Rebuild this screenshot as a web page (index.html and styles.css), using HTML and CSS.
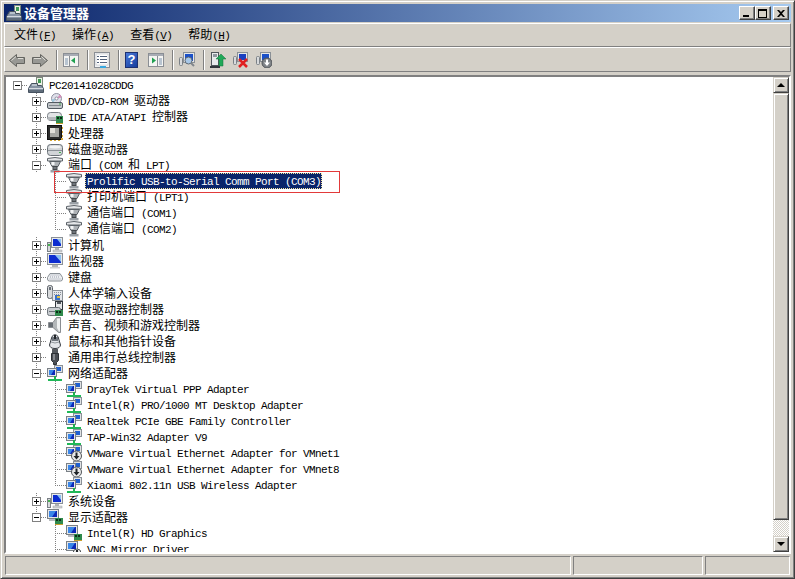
FILE: index.html
```html
<!DOCTYPE html>
<html lang="zh-CN">
<head>
<meta charset="utf-8">
<title>设备管理器</title>
<link rel="stylesheet" href="styles.css">
</head>
<body>
<svg class="defs" xmlns="http://www.w3.org/2000/svg">
  <symbol id="i-pc" viewBox="0 0 16 16">
    <rect x="8.500" y="0.500" width="6" height="9" fill="#eef2e8" stroke="#7c8a7c"/>
    <rect x="10" y="2" width="3" height="4" fill="#3f9a55"/>
    <path d="M3.500 6.500h6v2h4l2 3v4H.5v-4z" fill="#8794a4" stroke="#46525f"/>
    <rect x="1" y="11" width="14" height="1" fill="#d5dae0"/>
    <rect x="1" y="13" width="14" height="2" fill="#5f6c7a"/>
    <rect x="4" y="7" width="5" height="2" fill="#b8c2cc"/>
  </symbol>
  <symbol id="i-dvd" viewBox="0 0 16 16">
    <circle cx="9.500" cy="5.500" r="5" fill="#dfe0ea" stroke="#8f90a0"/>
    <path d="M9.500 5.500L13 1.500a5 5 0 0 1 1.500 3z" fill="#d58fb8"/>
    <path d="M9.500 5.500L6 9.500a5 5 0 0 1-1.500-3z" fill="#9fc8dc"/>
    <circle cx="9.500" cy="5.500" r="1.500" fill="#fff" stroke="#8f90a0"/>
    <rect x="0.500" y="9.500" width="15" height="6" rx="1.500" fill="#c4c8cc" stroke="#525a62"/>
    <rect x="2" y="12" width="12" height="1" fill="#848a90"/>
    <rect x="12" y="10.500" width="2" height="1" fill="#40b050"/>
  </symbol>
  <symbol id="i-ide" viewBox="0 0 16 16">
    <rect x="0.500" y="3.500" width="14" height="8" rx="3" fill="#e2e4e6" stroke="#7a8086"/>
    <rect x="1" y="8" width="13" height="3" fill="#b4b8bc"/>
    <rect x="9" y="7" width="7" height="7" fill="#2f8a4c"/>
    <rect x="10" y="8" width="2" height="2" fill="#0c2c18"/>
    <rect x="13" y="8" width="2" height="2" fill="#0c2c18"/>
    <rect x="9" y="14" width="7" height="1" fill="#c9a030"/>
  </symbol>
  <symbol id="i-cpu" viewBox="0 0 16 16">
    <rect x="0.500" y="0.500" width="14" height="14" fill="#2c2c2c" stroke="#111"/>
    <rect x="3" y="3" width="9" height="9" fill="#a8a8a4"/>
    <rect x="3" y="3" width="5" height="5" fill="#e2e0da"/>
    <rect x="15" y="2" width="1" height="2" fill="#d6a83a"/>
    <rect x="15" y="6" width="1" height="2" fill="#d6a83a"/>
    <rect x="15" y="10" width="1" height="2" fill="#d6a83a"/>
    <rect x="14" y="13" width="2" height="2" fill="#d6a83a"/>
    <rect x="3" y="15" width="2" height="1" fill="#d6a83a"/>
    <rect x="7" y="15" width="2" height="1" fill="#d6a83a"/>
    <rect x="11" y="15" width="2" height="1" fill="#d6a83a"/>
  </symbol>
  <symbol id="i-disk" viewBox="0 0 16 16">
    <rect x="0.500" y="3.500" width="15" height="11" rx="3" fill="#d2d5d8" stroke="#6b7278"/>
    <ellipse cx="8" cy="6" rx="6" ry="1.500" fill="#f2f3f4"/>
    <rect x="1" y="9" width="14" height="1" fill="#8c9298"/>
    <rect x="12" y="11" width="2" height="1" fill="#40b050"/>
  </symbol>
  <symbol id="i-port" viewBox="0 0 16 16">
    <path d="M0.500 1.500q7.500-2 15 0v2.500h-15z" fill="#e4e6e8" stroke="#5c6268"/>
    <path d="M2.500 4.500h11l-2.500 5h-6z" fill="#aeb2b6" stroke="#5c6268"/>
    <rect x="4.500" y="5" width="3" height="3" fill="#f4f5f6"/>
    <rect x="6" y="9.500" width="4" height="3" fill="#70767c" stroke="#44484c"/>
    <rect x="3.500" y="13" width="9" height="2.500" fill="#9aa0a6"/>
  </symbol>
  <symbol id="i-computer" viewBox="0 0 16 16">
    <rect x="0.500" y="5.500" width="3" height="9" fill="#d8dadc" stroke="#7a8086"/>
    <rect x="1" y="7" width="2" height="2" fill="#48b050"/>
    <rect x="4.500" y="0.500" width="11" height="10" fill="#e8eaec" stroke="#8a9096"/>
    <rect x="6" y="2" width="8" height="7" fill="#0c2cd0"/>
    <path d="M10 2h4v5z" fill="#8cc0f0"/>
    <rect x="8" y="11" width="4" height="2" fill="#b0b4b8"/>
    <rect x="6" y="13" width="9" height="2" fill="#d4d6d8" stroke="#9a9ea2" stroke-width="0.500"/>
  </symbol>
  <symbol id="i-monitor" viewBox="0 0 16 16">
    <rect x="0.500" y="0.500" width="15" height="11" fill="#e6e8ea" stroke="#8a9096"/>
    <rect x="2" y="2" width="12" height="8" fill="#0c2cd0"/>
    <path d="M8 2h6v7z" fill="#8cc0f0"/>
    <rect x="5" y="12" width="6" height="2" fill="#b0b4b8"/>
    <rect x="3" y="14" width="10" height="1.500" fill="#d0d2d4"/>
  </symbol>
  <symbol id="i-kbd" viewBox="0 0 16 16">
    <path d="M3 4.500h10l2.500 4v1.500q0 2-2 2h-11q-2 0-2-2V8.500z" fill="#eceef0" stroke="#8a9096"/>
    <path d="M3.500 6h9M3 8h10M2.500 10h11" stroke="#9aa0b0" stroke-dasharray="1 1"/>
  </symbol>
  <symbol id="i-hid" viewBox="0 0 16 16">
    <rect x="0.500" y="0.500" width="5" height="13" rx="2" fill="#d8dadc" stroke="#5c6268"/>
    <rect x="2" y="2" width="2" height="3" fill="#6a7078"/>
    <rect x="5.500" y="5.500" width="10" height="10" fill="#e4e6ea" stroke="#8a9096"/>
    <path d="M7 7.500h7M7 9.500h7" stroke="#8a9096" stroke-dasharray="1 1"/>
    <rect x="8" y="10" width="5" height="5" fill="#3a70c8"/>
    <rect x="10" y="11" width="3" height="2" fill="#e0c040"/>
  </symbol>
  <symbol id="i-floppy" viewBox="0 0 16 16">
    <rect x="8.500" y="0.500" width="7" height="8" fill="#e4e6e8" stroke="#30363c"/>
    <rect x="10" y="1" width="4" height="2" fill="#50565c"/>
    <rect x="0.500" y="6.500" width="13" height="8" rx="2" fill="#c8ccd0" stroke="#6b7278"/>
    <rect x="2" y="10" width="6" height="1" fill="#6b7278"/>
    <rect x="8" y="9" width="8" height="6" fill="#2f8a4c"/>
    <rect x="9" y="10" width="2" height="2" fill="#0c2c18"/>
    <rect x="12" y="10" width="2" height="2" fill="#0c2c18"/>
  </symbol>
  <symbol id="i-sound" viewBox="0 0 16 16">
    <path d="M9.500 0.500h4v15h-2L6 10.500H1.500v-5H6z" fill="#b4b8ba" stroke="#8a8e92"/>
    <path d="M10 1.500h3v13h-1L10 11z" fill="#f0f2f2"/>
    <rect x="2" y="6" width="4" height="4" fill="#666c72"/>
  </symbol>
  <symbol id="i-mouse" viewBox="0 0 16 16">
    <path d="M5 3.500Q8 0 11 3.500L13.500 12Q13 15.500 8 15.500T2.500 12z" fill="#e4e6ea" stroke="#33383e"/>
    <path d="M5 4h6v4H5z" fill="#70767e"/>
    <rect x="7" y="2" width="2" height="4" fill="#22262a"/>
    <path d="M4 9q4 2 8 0" stroke="#90969c" fill="none"/>
  </symbol>
  <symbol id="i-usb" viewBox="0 0 16 16">
    <rect x="5" y="0" width="6" height="4" fill="#55595e"/>
    <path d="M4.500 4.500h7v7l-2 2v2h-3v-2l-2-2z" fill="#4a4e54" stroke="#2c3034"/>
    <rect x="6" y="5" width="2" height="6" fill="#86898e"/>
  </symbol>
  <symbol id="i-net" viewBox="0 0 16 16">
    <rect x="7.500" y="0.500" width="8" height="7" fill="#e0e2e4" stroke="#8a9096"/>
    <rect x="9" y="2" width="5" height="4" fill="#2060d0"/>
    <rect x="0.500" y="3.500" width="9" height="8" fill="#e4e6e8" stroke="#7a8086"/>
    <rect x="2" y="5" width="6" height="5" fill="#0c28b8"/>
    <path d="M2 5h5L4 10H2z" fill="#3a86e8"/>
    <rect x="7" y="11" width="2" height="3" fill="#20b050"/>
    <rect x="1" y="14" width="14" height="2" fill="#20b858"/>
  </symbol>
  <symbol id="i-netdown" viewBox="0 0 16 16">
    <rect x="7.500" y="0.500" width="8" height="7" fill="#e0e2e4" stroke="#8a9096"/>
    <rect x="9" y="2" width="5" height="4" fill="#2060d0"/>
    <rect x="0.500" y="2.500" width="9" height="8" fill="#e4e6e8" stroke="#7a8086"/>
    <rect x="2" y="4" width="6" height="5" fill="#0c28b8"/>
    <path d="M2 4h5L4 9H2z" fill="#3a86e8"/>
    <circle cx="10.500" cy="11" r="5" fill="#e8e8e8" stroke="#505458"/>
    <path d="M9.500 7.500h2v3.500h2l-3 3.500-3-3.500h2z" fill="#202428"/>
  </symbol>
  <symbol id="i-display" viewBox="0 0 16 16">
    <rect x="0.500" y="0.500" width="11" height="9" fill="#e4e6e8" stroke="#7a8086"/>
    <rect x="2" y="2" width="8" height="6" fill="#0c28b8"/>
    <path d="M2 2h7L5 8H2z" fill="#3a86e8"/>
    <rect x="2" y="10" width="8" height="2" fill="#b8bcc0"/>
    <rect x="8" y="9" width="8" height="6" fill="#2f8a4c"/>
    <rect x="9" y="10" width="2" height="2" fill="#0c2c18"/>
    <rect x="12" y="10" width="2" height="2" fill="#0c2c18"/>
    <rect x="8" y="15" width="8" height="1" fill="#c9a030"/>
  </symbol>
  <symbol id="i-vnc" viewBox="0 0 16 16">
    <rect x="0.500" y="0.500" width="11" height="9" fill="#e4e6e8" stroke="#7a8086"/>
    <rect x="2" y="2" width="8" height="6" fill="#0c28b8"/>
    <path d="M2 2h7L5 8H2z" fill="#3a86e8"/>
    <circle cx="11" cy="12" r="4" fill="#e8e8e8" stroke="#505458"/>
    <path d="M10 9h2v3h2l-3 3-3-3h2z" fill="#202428"/>
  </symbol>
  <symbol id="t-back" viewBox="0 0 16 16">
    <path d="M7.500 2.500L.5 8.500l7 6v-3h8v-6h-8z" fill="#989894" stroke="#646460"/>
    <path d="M7 4.500L2.500 8.500M9 6.500h5" stroke="#dedcd6" fill="none"/>
  </symbol>
  <symbol id="t-fwd" viewBox="0 0 16 16">
    <path d="M8.500 2.500l7 6-7 6v-3h-8v-6h8z" fill="#989894" stroke="#646460"/>
    <path d="M2 6.500h7M9.500 4.500l4 4" stroke="#dedcd6" fill="none"/>
  </symbol>
  <symbol id="t-tree" viewBox="0 0 16 16">
    <rect x="0.500" y="1.500" width="15" height="13" fill="#f4f4f2" stroke="#8a8e94"/>
    <rect x="1" y="2" width="14" height="2" fill="#a8acb4"/>
    <rect x="2" y="6" width="3" height="7" fill="#b8c4d0"/>
    <path d="M6.500 4v10" stroke="#8a8e94"/>
    <path d="M12 5.500v6l-4-3z" fill="#20a050"/>
  </symbol>
  <symbol id="t-props" viewBox="0 0 16 16">
    <rect x="0.500" y="0.500" width="15" height="15" fill="#f0f2f4" stroke="#8a8e94"/>
    <rect x="2" y="2" width="12" height="11" fill="#fff" stroke="#b0b4b8" stroke-width="0.500"/>
    <path d="M3 4.500h2M6 4.500h7M3 7.500h2M6 7.500h7M3 10.500h2M6 10.500h7" stroke="#50607a"/>
    <rect x="6" y="14" width="6" height="2" fill="#38a8e0"/>
  </symbol>
  <symbol id="t-action" viewBox="0 0 16 16">
    <rect x="0.500" y="1.500" width="15" height="13" fill="#f4f4f2" stroke="#8a8e94"/>
    <rect x="1" y="2" width="14" height="2" fill="#a8acb4"/>
    <rect x="11" y="6" width="3" height="7" fill="#b8c4d0"/>
    <path d="M9.500 4v10" stroke="#8a8e94"/>
    <path d="M4 5.500v6l4-3z" fill="#20a050"/>
  </symbol>
  <symbol id="t-scan" viewBox="0 0 16 16">
    <rect x="0.500" y="5.500" width="3" height="8" rx="1" fill="#d8dadc" stroke="#7a8086"/>
    <rect x="4.500" y="0.500" width="11" height="10" fill="#e4e6e8" stroke="#8a9096"/>
    <rect x="6" y="2" width="8" height="7" fill="#1a50c8"/>
    <circle cx="9.500" cy="8.500" r="3.500" fill="#a8c8e8" stroke="#606870"/>
    <path d="M12 11l3 3" stroke="#80868c" stroke-width="2"/>
  </symbol>
  <symbol id="t-update" viewBox="0 0 16 16">
    <rect x="1.500" y="0.500" width="7" height="13" fill="#e8eaec" stroke="#50565c"/>
    <rect x="3" y="2" width="4" height="3" fill="#9098a0"/>
    <rect x="0" y="14" width="10" height="2" fill="#30363c"/>
    <path d="M11 2l5 5h-3v7H9V7H6z" fill="#20a858" stroke="#107038" stroke-width="0.500"/>
  </symbol>
  <symbol id="t-remove" viewBox="0 0 16 16">
    <rect x="0.500" y="4.500" width="3" height="8" rx="1" fill="#d8dadc" stroke="#7a8086"/>
    <rect x="4.500" y="0.500" width="10" height="9" fill="#e4e6e8" stroke="#8a9096"/>
    <rect x="6" y="2" width="7" height="6" fill="#1a40c0"/>
    <path d="M6 7l8 8M14 7l-8 8" stroke="#e02020" stroke-width="2.500"/>
  </symbol>
  <symbol id="t-disable" viewBox="0 0 16 16">
    <rect x="0.500" y="4.500" width="3" height="8" rx="1" fill="#d8dadc" stroke="#7a8086"/>
    <rect x="4.500" y="0.500" width="10" height="9" fill="#e4e6e8" stroke="#8a9096"/>
    <rect x="6" y="2" width="7" height="6" fill="#1a50c8"/>
    <circle cx="11" cy="11" r="5" fill="#808488" stroke="#505458"/>
    <path d="M10 7.500h2v3h2l-3 3.500-3-3.500h2z" fill="#fff"/>
  </symbol>
</svg>

<div class="window">
  <header class="titlebar">
    <svg class="ic title-icon"><use href="#i-pc"/></svg>
    <span class="title-text">设备管理器</span>
    <div class="caption">
      <button class="cap cap-min" aria-label="最小化"><i></i></button>
      <button class="cap cap-max" aria-label="最大化"><i></i></button>
      <button class="cap cap-close" aria-label="关闭"><svg viewBox="0 0 8 7"><path d="M0 0h2l2 2 2-2h2L5 3.500 8 7H6L4 5 2 7H0l3-3.500z"/></svg></button>
    </div>
  </header>

  <nav class="bar menubar">
    <span class="menu">文件<span class="lat">(<u>F</u>)</span></span>
    <span class="menu">操作<span class="lat">(<u>A</u>)</span></span>
    <span class="menu">查看<span class="lat">(<u>V</u>)</span></span>
    <span class="menu">帮助<span class="lat">(<u>H</u>)</span></span>
  </nav>

  <div class="bar toolbar">
    <span class="tb"><svg class="ic"><use href="#t-back"/></svg></span>
    <span class="tb"><svg class="ic"><use href="#t-fwd"/></svg></span>
    <span class="sep"></span>
    <span class="tb"><svg class="ic"><use href="#t-tree"/></svg></span>
    <span class="sep"></span>
    <span class="tb"><svg class="ic"><use href="#t-props"/></svg></span>
    <span class="sep"></span>
    <span class="tb"><span class="help">?</span></span>
    <span class="tb"><svg class="ic"><use href="#t-action"/></svg></span>
    <span class="sep"></span>
    <span class="tb"><svg class="ic"><use href="#t-scan"/></svg></span>
    <span class="sep"></span>
    <span class="tb"><svg class="ic"><use href="#t-update"/></svg></span>
    <span class="tb"><svg class="ic"><use href="#t-remove"/></svg></span>
    <span class="tb"><svg class="ic"><use href="#t-disable"/></svg></span>
  </div>

  <main class="panel">
    <div class="tree">
      <div class="row root"><span class="tg minus"></span><span class="stub"></span><svg class="ic"><use href="#i-pc"/></svg><span class="label lat">PC20141028CDDG</span></div>

      <div class="row l1 first"><span class="tg"></span><span class="stub"></span><svg class="ic"><use href="#i-dvd"/></svg><span class="label"><span class="lat">DVD/CD-ROM </span>驱动器</span></div>
      <div class="row l1"><span class="tg"></span><span class="stub"></span><svg class="ic"><use href="#i-ide"/></svg><span class="label"><span class="lat">IDE ATA/ATAPI </span>控制器</span></div>
      <div class="row l1"><span class="tg"></span><span class="stub"></span><svg class="ic"><use href="#i-cpu"/></svg><span class="label">处理器</span></div>
      <div class="row l1"><span class="tg"></span><span class="stub"></span><svg class="ic"><use href="#i-disk"/></svg><span class="label">磁盘驱动器</span></div>
      <div class="row l1"><span class="tg minus"></span><span class="stub"></span><svg class="ic"><use href="#i-port"/></svg><span class="label">端口<span class="lat"> (COM </span>和<span class="lat"> LPT)</span></span></div>

      <div class="row l2"><span class="stub"></span><svg class="ic"><use href="#i-port"/></svg><span class="label lat selected">Prolific USB-to-Serial Comm Port (COM3)</span></div>
      <div class="row l2"><span class="stub"></span><svg class="ic"><use href="#i-port"/></svg><span class="label">打印机端口<span class="lat"> (LPT1)</span></span></div>
      <div class="row l2"><span class="stub"></span><svg class="ic"><use href="#i-port"/></svg><span class="label">通信端口<span class="lat"> (COM1)</span></span></div>
      <div class="row l2 last"><span class="stub"></span><svg class="ic"><use href="#i-port"/></svg><span class="label">通信端口<span class="lat"> (COM2)</span></span></div>

      <div class="row l1"><span class="tg"></span><span class="stub"></span><svg class="ic"><use href="#i-computer"/></svg><span class="label">计算机</span></div>
      <div class="row l1"><span class="tg"></span><span class="stub"></span><svg class="ic"><use href="#i-monitor"/></svg><span class="label">监视器</span></div>
      <div class="row l1"><span class="tg"></span><span class="stub"></span><svg class="ic"><use href="#i-kbd"/></svg><span class="label">键盘</span></div>
      <div class="row l1"><span class="tg"></span><span class="stub"></span><svg class="ic"><use href="#i-hid"/></svg><span class="label">人体学输入设备</span></div>
      <div class="row l1"><span class="tg"></span><span class="stub"></span><svg class="ic"><use href="#i-floppy"/></svg><span class="label">软盘驱动器控制器</span></div>
      <div class="row l1"><span class="tg"></span><span class="stub"></span><svg class="ic"><use href="#i-sound"/></svg><span class="label">声音、视频和游戏控制器</span></div>
      <div class="row l1"><span class="tg"></span><span class="stub"></span><svg class="ic"><use href="#i-mouse"/></svg><span class="label">鼠标和其他指针设备</span></div>
      <div class="row l1"><span class="tg"></span><span class="stub"></span><svg class="ic"><use href="#i-usb"/></svg><span class="label">通用串行总线控制器</span></div>
      <div class="row l1"><span class="tg minus"></span><span class="stub"></span><svg class="ic"><use href="#i-net"/></svg><span class="label">网络适配器</span></div>

      <div class="row l2"><span class="stub"></span><svg class="ic"><use href="#i-net"/></svg><span class="label lat">DrayTek Virtual PPP Adapter</span></div>
      <div class="row l2"><span class="stub"></span><svg class="ic"><use href="#i-net"/></svg><span class="label lat">Intel(R) PRO/1000 MT Desktop Adapter</span></div>
      <div class="row l2"><span class="stub"></span><svg class="ic"><use href="#i-net"/></svg><span class="label lat">Realtek PCIe GBE Family Controller</span></div>
      <div class="row l2"><span class="stub"></span><svg class="ic"><use href="#i-net"/></svg><span class="label lat">TAP-Win32 Adapter V9</span></div>
      <div class="row l2"><span class="stub"></span><svg class="ic"><use href="#i-netdown"/></svg><span class="label lat">VMware Virtual Ethernet Adapter for VMnet1</span></div>
      <div class="row l2"><span class="stub"></span><svg class="ic"><use href="#i-netdown"/></svg><span class="label lat">VMware Virtual Ethernet Adapter for VMnet8</span></div>
      <div class="row l2 last"><span class="stub"></span><svg class="ic"><use href="#i-net"/></svg><span class="label lat">Xiaomi 802.11n USB Wireless Adapter</span></div>

      <div class="row l1"><span class="tg"></span><span class="stub"></span><svg class="ic"><use href="#i-computer"/></svg><span class="label">系统设备</span></div>
      <div class="row l1 end"><span class="tg minus"></span><span class="stub"></span><svg class="ic"><use href="#i-display"/></svg><span class="label">显示适配器</span></div>

      <div class="row l2"><span class="stub"></span><svg class="ic"><use href="#i-display"/></svg><span class="label lat">Intel(R) HD Graphics</span></div>
      <div class="row l2"><span class="stub"></span><svg class="ic"><use href="#i-vnc"/></svg><span class="label lat">VNC Mirror Driver</span></div>

      <div class="callout"></div>
    </div>

    <div class="scrollbar">
      <span class="sb-btn"><i class="arrow up"></i></span>
      <span class="sb-thumb"></span>
      <span class="sb-track"></span>
      <span class="sb-btn"><i class="arrow down"></i></span>
    </div>
  </main>

  <footer class="status">
    <span class="pane"></span>
    <span class="pane"></span>
    <span class="pane"></span>
  </footer>
</div>
</body>
</html>
```

FILE: styles.css
```css
* { box-sizing: border-box; }

html, body {
  margin: 0;
  height: 100%;
  overflow: hidden;
  background: #d4d0c8;
}

.defs { display: block; width: 0; height: 0; }

.window {
  width: 795px;
  height: 579px;
  display: flex;
  flex-direction: column;
  padding: 3px;
  background: #d4d0c8;
  border: 1px solid;
  border-color: #d4d0c8 #404040 #404040 #d4d0c8;
  box-shadow: inset 1px 1px #fff, inset -1px -1px #808080;
  font: 12px/16px "Noto Sans CJK SC", sans-serif;
  color: #000;
}

.lat {
  font-family: "Liberation Mono", monospace;
  font-size: 11px;
  letter-spacing: -0.6px;
  white-space: pre;
}

.ic { display: block; width: 16px; height: 16px; flex: none; }

/* Title bar */
.titlebar {
  height: 18px;
  flex: none;
  display: flex;
  align-items: center;
  padding: 0 2px;
  background: linear-gradient(90deg, #0a246a, #a6caf0);
}

.title-text {
  margin-left: 2px;
  color: #fff;
  font-size: 13px;
  font-weight: 700;
  line-height: 18px;
}

.caption { margin-left: auto; display: flex; }

.cap {
  width: 16px;
  height: 14px;
  padding: 0;
  background: #d4d0c8;
  border: 1px solid;
  border-color: #fff #404040 #404040 #fff;
  box-shadow: inset -1px -1px #808080;
  display: flex;
  align-items: center;
  justify-content: center;
}

.cap-close { margin-left: 2px; }
.cap-close svg { width: 8px; height: 7px; display: block; }

.cap-min i { width: 6px; height: 2px; margin: 6px 3px 0 0; background: #000; display: block; }
.cap-max i { width: 9px; height: 9px; border: 1px solid #000; border-top-width: 2px; margin-right: 1px; display: block; }

/* Menu and toolbar */
.bar {
  flex: none;
  display: flex;
  align-items: center;
  border: 1px solid;
  border-color: #fff #808080 #808080 #fff;
}

.menubar { height: 24px; margin-top: 1px; padding-left: 1px; }

.menu {
  padding: 0 8px;
  white-space: nowrap;
  line-height: 16px;
}

.toolbar { height: 25px; padding-left: 1px; }

.tb {
  width: 23px;
  height: 16px;
  padding-left: 3px;
  flex: none;
}

.sep {
  width: 2px;
  height: 20px;
  margin: 0 2px 0 4px;
  flex: none;
  border-left: 1px solid #808080;
  border-right: 1px solid #fff;
}

.help {
  display: block;
  width: 13px;
  height: 16px;
  background: linear-gradient(135deg, #4a78d8, #143c9c);
  border: 1px solid #1c3070;
  color: #fff;
  font: 700 13px/14px "Liberation Sans", sans-serif;
  text-align: center;
}

/* Tree panel */
.panel {
  flex: none;
  height: 479px;
  margin-top: 3px;
  display: flex;
  border: 2px solid;
  border-color: #808080 #fff #fff #808080;
  box-shadow: inset 1px 1px #404040, inset -1px -1px #d4d0c8;
  background: #fff;
}

.tree {
  flex: 1;
  min-width: 0;
  position: relative;
  overflow: hidden;
  background: #fff;
}

.row {
  height: 16px;
  display: flex;
  align-items: center;
  white-space: nowrap;
  background-repeat: no-repeat;
  background-image: repeating-linear-gradient(#808080 0 1px, transparent 1px 2px);
  background-size: 0 0;
}

.root { padding-left: 7px; }

.l1 {
  padding-left: 26px;
  background-size: 1px 100%;
  background-position: 30px 0;
}
.l1.end { background-size: 1px 50%; }

.l2 {
  padding-left: 49px;
  background-size: 1px 100%;
  background-position: 49px 0;
}
.l2.last { background-size: 1px 50%; }

.tg {
  width: 9px;
  height: 9px;
  flex: none;
  border: 1px solid #808080;
  background:
    linear-gradient(#000, #000) center / 5px 1px no-repeat,
    linear-gradient(#000, #000) center / 1px 5px no-repeat,
    #fff;
}

.tg.minus {
  background:
    linear-gradient(#000, #000) center / 5px 1px no-repeat,
    #fff;
}

.stub {
  width: 6px;
  height: 1px;
  flex: none;
  background: repeating-linear-gradient(90deg, #808080 0 1px, transparent 1px 2px);
}

.l2 .stub { width: 11px; }

.label {
  margin-left: 5px;
  line-height: 16px;
}

.label.lat {
  font-size: 11px;
  height: 16px;
  padding-top: 1px;
}

.selected {
  margin-left: 3px;
  padding: 1px 1px 0 2px;
  color: #fff;
  background: #0a246a;
  outline: 1px dotted #f5e6a0;
  outline-offset: -1px;
}

.label.selected { margin-left: 3px; }

/* The red annotation drawn over the screenshot */
.callout {
  position: absolute;
  left: 48px;
  top: 94px;
  width: 286px;
  height: 22px;
  border: 1px solid #e23a3a;
}

/* Scrollbar */
.scrollbar {
  width: 16px;
  flex: none;
  display: flex;
  flex-direction: column;
}

.sb-btn, .sb-thumb {
  display: flex;
  align-items: center;
  justify-content: center;
  background: #d4d0c8;
  border: 1px solid;
  border-color: #d4d0c8 #404040 #404040 #d4d0c8;
  box-shadow: inset 1px 1px #fff, inset -1px -1px #808080;
}

.sb-btn { height: 16px; flex: none; }
.sb-thumb { flex: 1; }

.sb-track {
  height: 16px;
  flex: none;
  background: repeating-conic-gradient(#d4d0c8 0 25%, #fff 0 50%) 0 0 / 2px 2px;
}

.arrow {
  width: 0;
  height: 0;
  border-left: 4px solid transparent;
  border-right: 4px solid transparent;
}
.arrow.up { border-bottom: 4px solid #000; }
.arrow.down { border-top: 4px solid #000; }

/* Status bar */
.status {
  flex: 1;
  display: grid;
  grid-template-columns: 566px 130px 85px;
  column-gap: 2px;
  padding: 2px 0 0 1px;
}

.pane {
  border: 1px solid;
  border-color: #808080 #fff #fff #808080;
}
```
